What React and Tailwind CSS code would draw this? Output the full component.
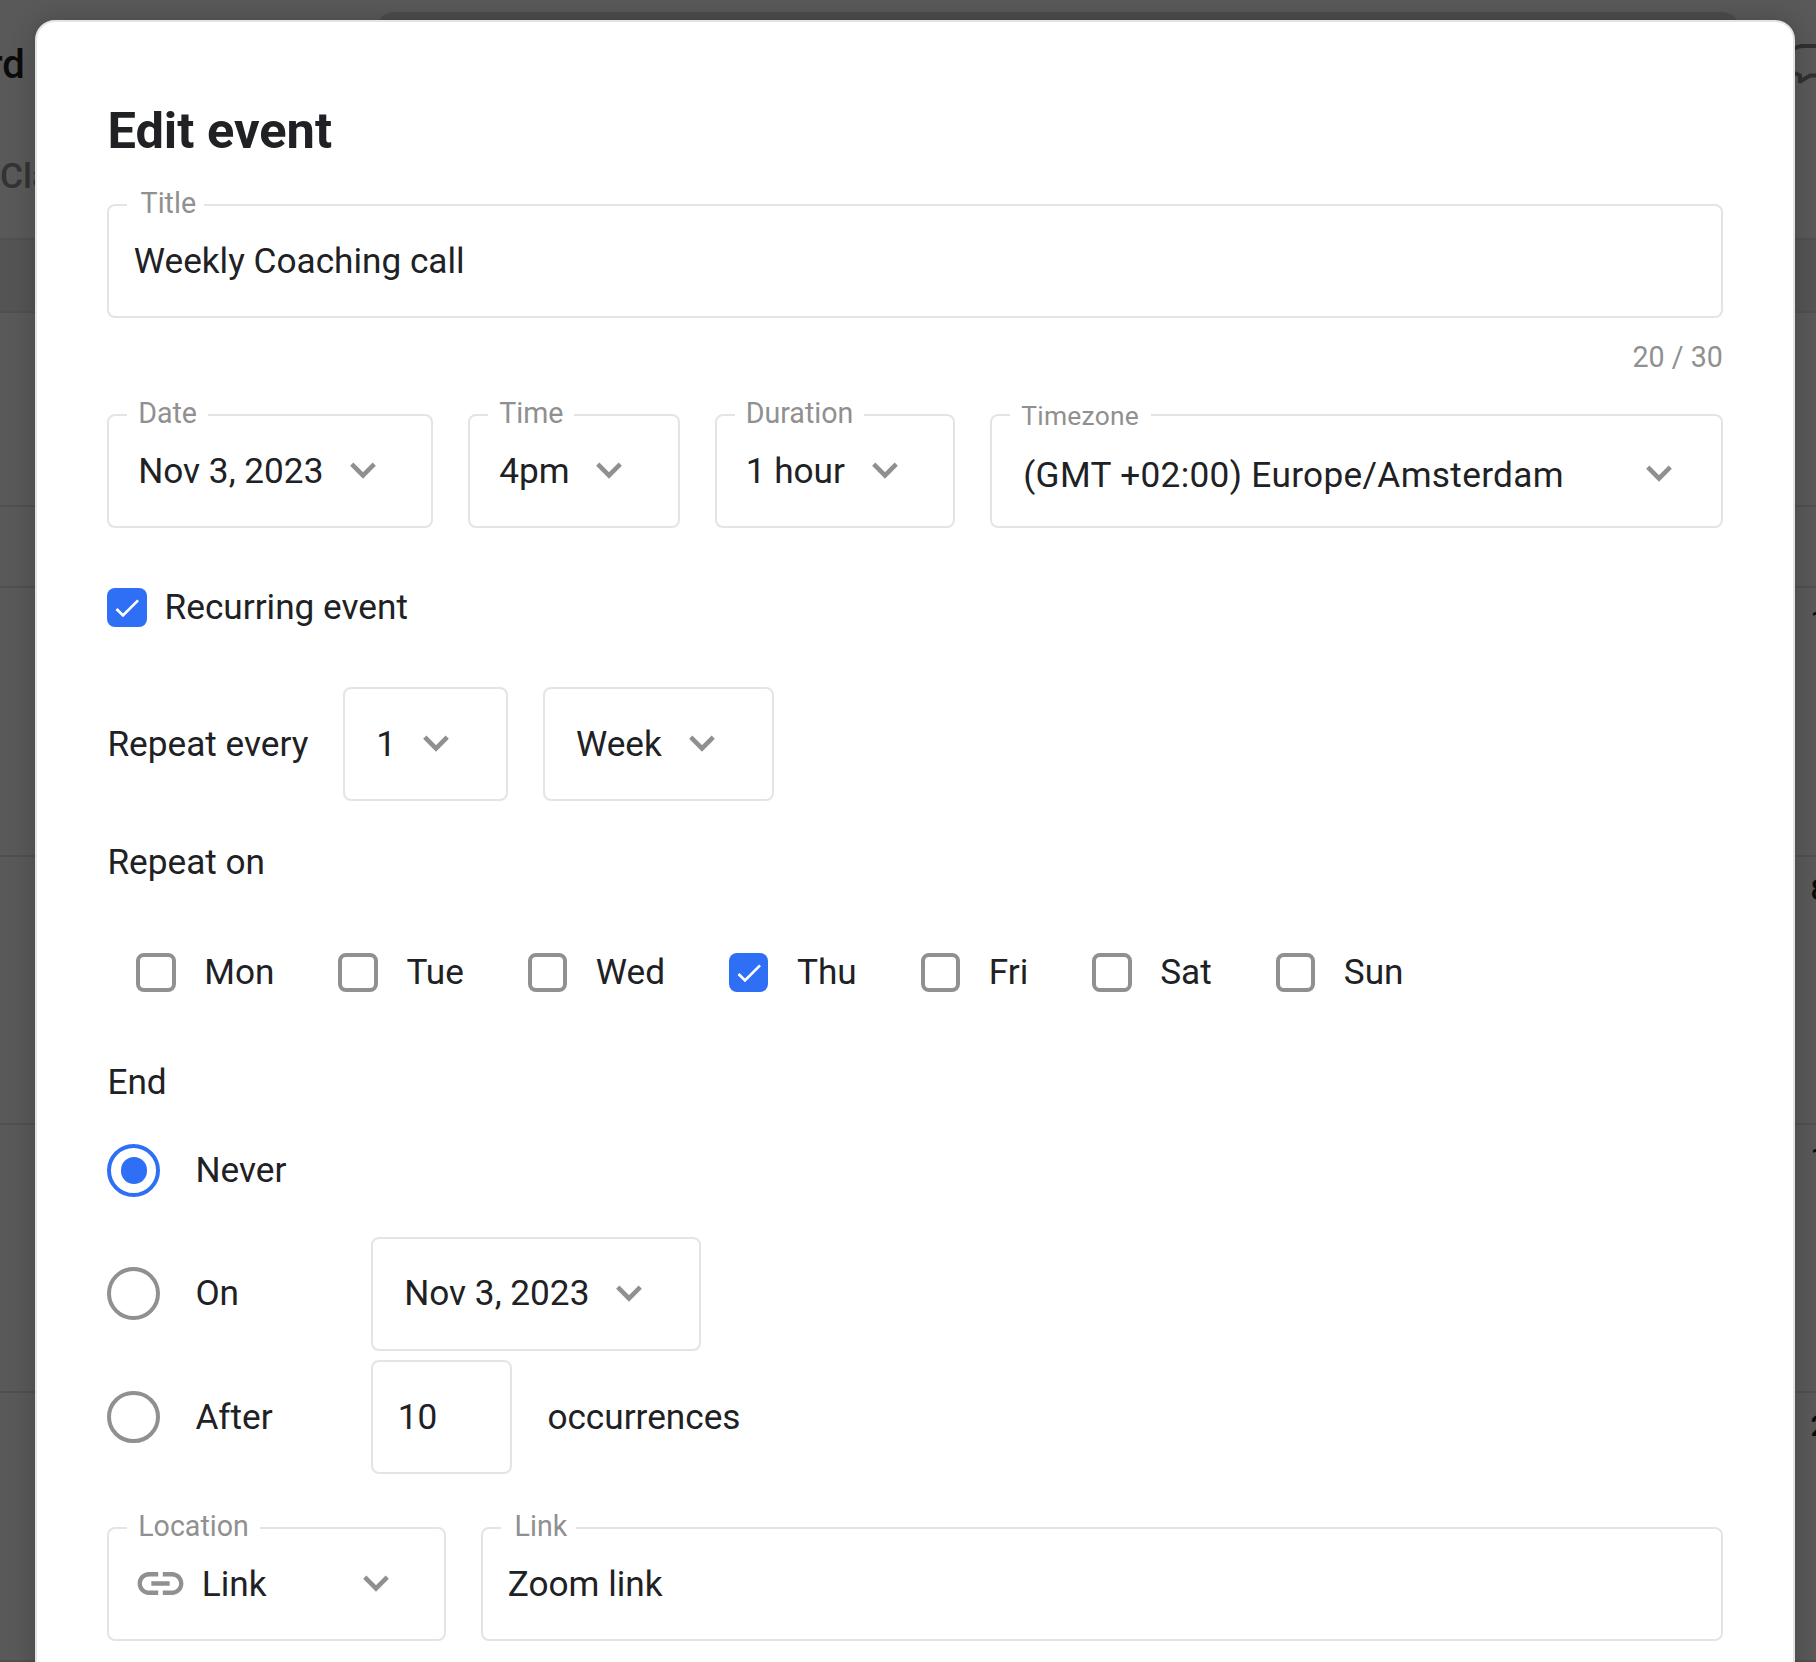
import { useState } from "react";
import clsx from "clsx";
import { MdCheck, MdLink } from "react-icons/md";

const DAYS = ["Mon", "Tue", "Wed", "Thu", "Fri", "Sat", "Sun"];

// Calendar rows behind the modal
const ROWS = [
  { height: "h-[73px]", tone: "bg-[#545454]" },
  { height: "h-[194px]" },
  { height: "h-[81px]" },
  { height: "h-[269px]", day: "1" },
  { height: "h-[268px]", day: "8" },
  { height: "h-[268px]", day: "1" },
  { height: "h-[269px]", day: "2" },
  { height: "h-[2px]" },
];

function Backdrop() {
  return (
    <div className="flex h-full flex-col bg-[#595959] font-medium">
      <div className="flex h-[238px] shrink-0 items-start justify-between">
        <div className="w-[375px] shrink-0">
          <p className="-ml-[11.5px] mt-[41px] text-[40px] leading-[48px] text-[#0b0b0b]">rd</p>
          <p className="mt-[66px] text-[35.2px] leading-[42px] text-[#333333]">Cla</p>
        </div>
        <div className="mt-3 h-[88px] grow rounded-[20px] bg-[#4c4c4c]" />
        <div className="flex w-[75px] shrink-0 justify-end pt-10">
          <svg width="25" height="48" viewBox="1791 40 25 48" fill="none" stroke="#303030" strokeWidth="4" strokeLinejoin="round">
            <path d="M1793 50C1795 47.5 1799 46 1804 46H1818" />
            <path d="M1792 73Q1796 73 1800 75.5L1800 81.5L1810 75.6H1818" />
          </svg>
        </div>
      </div>
      {ROWS.map((row, i) => (
        <div
          key={i}
          className={clsx("flex shrink-0 justify-end border-t-2 border-[#505050]", row.height, row.tone)}
        >
          {row.day && (
            <span className="mt-[15px] w-[5.5px] text-[30px] leading-[36px] text-[#0b0b0b]">{row.day}</span>
          )}
        </div>
      ))}
    </div>
  );
}

function FieldLabel({ children, className }) {
  return (
    <span className={clsx("absolute left-[18px] whitespace-nowrap bg-white leading-[34px] text-[#909090]", className)}>
      {children}
    </span>
  );
}

function Field({ label, labelClass = "-top-5 pl-[10.8px] pr-[11px] text-[28.6px]", className, children }) {
  return (
    <div
      className={clsx(
        "relative flex h-[114px] shrink-0 items-center rounded-lg border-2 border-[#e4e4e4]",
        className
      )}
    >
      {label && <FieldLabel className={labelClass}>{label}</FieldLabel>}
      {children}
    </div>
  );
}

function Chevron({ className = "-mt-0.5" }) {
  return (
    <svg viewBox="0 0 24 24" fill="none" className={clsx("size-[50px] shrink-0", className)}>
      <path d="M6.6 9.2L12 14.6L17.4 9.2" stroke="#909090" strokeWidth="2.2" />
    </svg>
  );
}

function Select({ value, valueClass, className = "pl-[28.8px] pr-[43.3px]", ...props }) {
  return (
    <Field className={className} {...props}>
      <span className={clsx("whitespace-nowrap", valueClass)}>{value}</span>
      <Chevron className="-mt-0.5 ml-[14.8px]" />
    </Field>
  );
}

function Checkbox({ checked }) {
  return (
    <span
      className={clsx(
        "flex h-[39px] w-[39.6px] shrink-0 items-center justify-center rounded-lg",
        checked ? "bg-[#2e6ff6]" : "border-4 border-[#909090]"
      )}
    >
      {checked && <MdCheck className="size-8 text-white" />}
    </span>
  );
}

function Radio({ label, labelClass, checked, onSelect, children, className }) {
  return (
    <div className={clsx("flex items-center", className)}>
      <label className={clsx("flex w-[264px] shrink-0 items-center gap-[35.2px]", labelClass)} onClick={onSelect}>
        <span
          className={clsx(
            "flex size-[52.8px] items-center justify-center rounded-full border-4",
            checked ? "border-[#2e6ff6]" : "border-[#909090]"
          )}
        >
          {checked && <span className="size-[26.4px] rounded-full bg-[#2e6ff6]" />}
        </span>
        {label}
      </label>
      {children}
    </div>
  );
}

export default function App() {
  const [recurring, setRecurring] = useState(true);
  const [days, setDays] = useState(["Thu"]);
  const [end, setEnd] = useState("never");

  const toggleDay = (day) => {
    setDays((prev) => (prev.includes(day) ? prev.filter((d) => d !== day) : [...prev, day]));
  };

  return (
    <div className="relative h-[1662px] w-[1816px] overflow-hidden font-['Roboto',sans-serif] text-[#202124]">
      <Backdrop />

      <div className="absolute inset-0 pl-[35px] pr-[21px] pt-5">
        <div className="h-[1800px] rounded-[20px] border-2 border-[#e4e4e4] bg-white pl-[70.4px] pr-[70.2px] pt-[79px] text-[35.2px] leading-[42px] shadow-[0_0_26px_rgba(0,0,0,0.2)]">
          <h1 className="text-[50.6px] font-bold leading-[60px]">Edit event</h1>

          <Field label="Title" labelClass="-top-5 pl-[13.2px] pr-2 text-[28.6px]" className="mt-[43px] pl-[24.4px]">
            Weekly Coaching call
          </Field>
          <p className="mt-[22px] text-right text-[28.6px] leading-[34px] text-[#909090]">20 / 30</p>

          <div className="mt-10 flex gap-[35.2px]">
            <Select label="Date" value="Nov 3, 2023" className="pl-[28.8px] pr-[43px]" />
            <Select label="Time" value="4pm" />
            <Select label="Duration" value="1 hour" />
            <Field
              label="Timezone"
              labelClass="-top-[17px] pl-[11px] pr-3 text-[26.4px] tracking-[0.25px]"
              className="grow justify-between pl-[31px] pr-[37px]"
            >
              <span className="mt-[7px] whitespace-nowrap tracking-[0.33px]">(GMT +02:00) Europe/Amsterdam</span>
              <Chevron className="mt-[3px]" />
            </Field>
          </div>

          <label className="mt-[60px] flex h-[39px] items-center gap-[17.6px]" onClick={() => setRecurring(!recurring)}>
            <Checkbox checked={recurring} />
            <span className="-mt-0.5">Recurring event</span>
          </label>

          <div className="mt-[60px] flex items-center gap-[35.2px]">
            <span className="-mr-[0.4px]">Repeat every</span>
            <Select value="1" className="pl-[31px] pr-[45.1px]" />
            <Select value="Week" className="pl-[31px] pr-[45px]" />
          </div>

          <p className="mt-10">Repeat on</p>
          <div className="mt-[70px] flex h-[39px] items-center gap-[63.8px] pl-[28.6px]">
            {DAYS.map((day) => (
              <label key={day} className="flex items-center gap-[28.6px]" onClick={() => toggleDay(day)}>
                <Checkbox checked={days.includes(day)} />
                <span className="-mt-0.5">{day}</span>
              </label>
            ))}
          </div>

          <p className="mt-[69px]">End</p>
          <Radio label="Never" checked={end === "never"} onSelect={() => setEnd("never")} className="mt-[41px] h-[53px]" />
          <Radio
            label="On"
            labelClass="-mt-px"
            checked={end === "on"}
            onSelect={() => setEnd("on")}
            className="mt-10"
          >
            <Select value="Nov 3, 2023" valueClass="-mt-0.5" className="pl-[30.8px] pr-[44.8px]" />
          </Radio>
          <Radio label="After" checked={end === "after"} onSelect={() => setEnd("after")} className="mt-[9px]">
            <Field className="w-[140.8px] pl-[24.4px]">10</Field>
            <span className="ml-[35.2px]">occurrences</span>
          </Radio>

          <div className="mt-[53px] flex gap-[35.2px]">
            <Field label="Location" className="w-[338.8px] justify-between pl-6 pr-[43.5px]">
              <span className="flex items-center gap-[13.4px]">
                <MdLink className="-mt-px size-[55px] text-[#909090]" />
                Link
              </span>
              <Chevron />
            </Field>
            <Field label="Link" labelClass="-top-5 pl-[13.2px] pr-[9px] text-[28.6px]" className="grow pl-[24.4px]">
              Zoom link
            </Field>
          </div>
        </div>
      </div>
    </div>
  );
}
